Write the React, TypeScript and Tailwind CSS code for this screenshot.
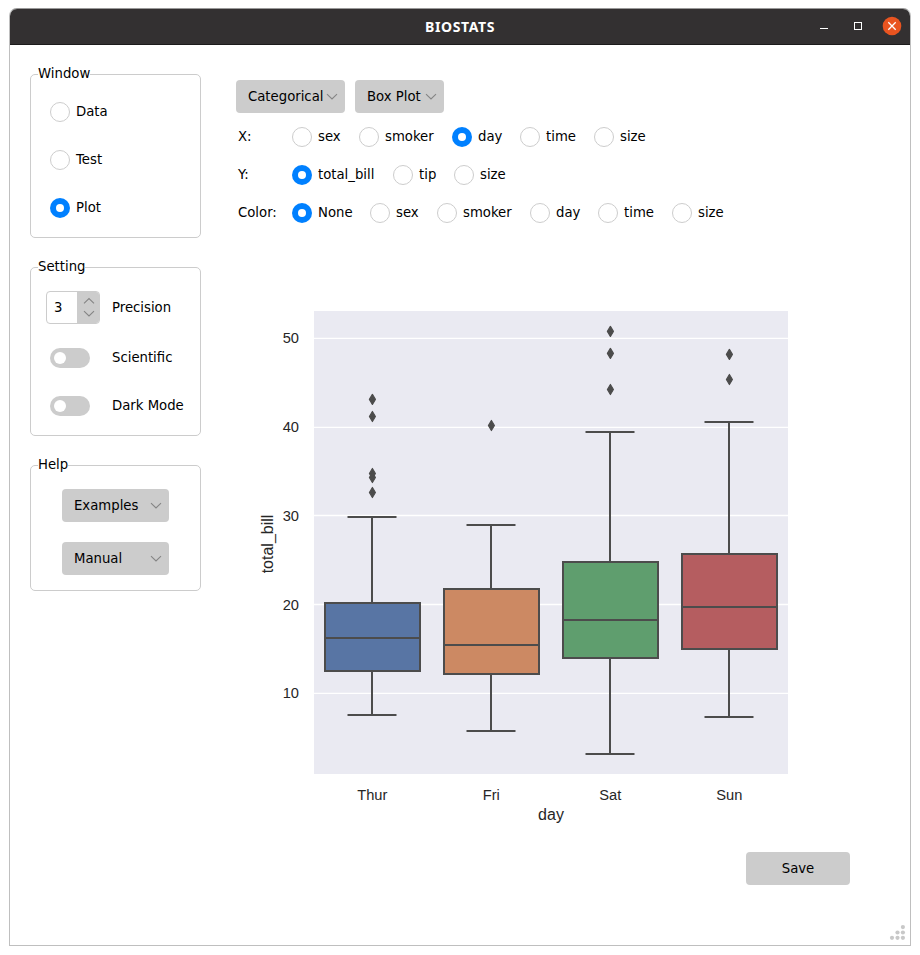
import React from "react";

const Chevron = ({ up = false }: { up?: boolean }) => (
  <svg width="12" height="8" viewBox="0 0 12 8" fill="none" stroke="#858585" strokeWidth="1.1" className="shrink-0">
    <path d={up ? "M1 6.3 L6 1.5 L11 6.3" : "M1 1.2 L6 6 L11 1.2"} />
  </svg>
);

const Dot = ({ on }: { on: boolean }) => (
  <span
    className={
      on
        ? "flex size-5 shrink-0 items-center justify-center rounded-full bg-[#0080ff]"
        : "size-5 shrink-0 rounded-full border border-[#cdcdcd] bg-white"
    }
  >
    {on && <span className="size-2 rounded-full bg-white" />}
  </span>
);

const Radio = ({ label, on = false, width = "" }: { label: string; on?: boolean; width?: string }) => (
  <label className={`flex h-5 shrink-0 items-center gap-1.5 ${width}`}>
    <Dot on={on} />
    <span>{label}</span>
  </label>
);

const Combo = ({ label, width }: { label: string; width: string }) => (
  <button className={`flex h-[33px] items-center justify-between rounded-[4px] bg-[#cccccc] pr-[7px] pl-3 ${width}`}>
    <span className="pt-px">{label}</span>
    <Chevron />
  </button>
);

const Group = ({ title, className, children }: { title: string; className: string; children: React.ReactNode }) => (
  <section className={`relative w-[171px] rounded-[5px] border border-[#cccccc] ${className}`}>
    <h2 className="absolute -top-[11px] left-[7px] bg-white leading-5">{title}</h2>
    {children}
  </section>
);

const Toggle = ({ label }: { label: string }) => (
  <label className="flex h-5 items-center gap-[22px] pl-[19px]">
    <span className="flex h-5 w-10 items-center rounded-full bg-[#cccccc] pl-1">
      <span className="size-3 rounded-full bg-white" />
    </span>
    <span className="whitespace-nowrap">{label}</span>
  </label>
);

const widths: Record<string, string> = {
  sex: "w-[67px]",
  smoker: "w-[93px]",
  day: "w-[68px]",
  time: "w-[74px]",
  size: "w-[74px]",
  total_bill: "w-[101px]",
  tip: "w-[61px]",
  None: "w-[78px]",
};

const rows = [
  { name: "X:", options: ["sex", "smoker", "day", "time", "size"], value: "day" },
  { name: "Y:", options: ["total_bill", "tip", "size"], value: "total_bill" },
  { name: "Color:", options: ["None", "sex", "smoker", "day", "time", "size"], value: "None" },
];

const boxes = [
  { name: "Thur", x: 372, fill: "#5875a4", hi: 517, q3: 603, med: 638, q1: 671, lo: 715, out: [399.4, 416.5, 473.5, 477.5, 492.5] },
  { name: "Fri", x: 491, fill: "#cc8963", hi: 525, q3: 589, med: 645, q1: 674, lo: 731, out: [425.5] },
  { name: "Sat", x: 610, fill: "#5f9e6e", hi: 432, q3: 562, med: 620, q1: 658, lo: 754, out: [331.4, 353.4, 389.5] },
  { name: "Sun", x: 729, fill: "#b55d60", hi: 422, q3: 554, med: 607, q1: 649, lo: 717, out: [354.4, 379.5] },
];

const ticks = [
  { v: 50, y: 338.4, b: 343 },
  { v: 40, y: 427.4, b: 432 },
  { v: 30, y: 515.5, b: 521 },
  { v: 20, y: 604.5, b: 610 },
  { v: 10, y: 693.4, b: 698 },
];

const BoxPlot = () => (
  <svg width="560" height="540" viewBox="236 295 560 540" fontFamily="'Liberation Sans', Arial, sans-serif" className="block">
    <rect x="314" y="311" width="474" height="463" fill="#eaeaf2" />
    {ticks.map((t) => (
      <g key={t.v}>
        <path d={`M314 ${t.y} H788`} stroke="#fff" strokeWidth="1.3" />
        <text x="299" y={t.b} textAnchor="end" fontSize="14.67" fill="#262626">
          {t.v}
        </text>
      </g>
    ))}
    {boxes.map((b) => (
      <g key={b.name} stroke="#4c4c4c" strokeWidth="2" fill="none">
        <rect x={b.x - 47} y={b.q3} width="95" height={b.q1 - b.q3} fill={b.fill} />
        <path d={`M${b.x} ${b.hi} V${b.q3} M${b.x} ${b.q1} V${b.lo}`} />
        <path d={`M${b.x - 24.5} ${b.hi} h49 M${b.x - 24.5} ${b.lo} h49 M${b.x - 47} ${b.med} h95`} />
        {b.out.map((y) => (
          <path key={y} d={`M${b.x + 0.4} ${y - 5} l3 5 l-3 5 l-3 -5 Z`} fill="#4c4c4c" strokeWidth="1.2" strokeLinejoin="round" />
        ))}
        <text x={b.x + 0.3} y="800" textAnchor="middle" fontSize="14.67" fill="#262626" stroke="none">
          {b.name}
        </text>
      </g>
    ))}
    <text x="551" y="820" textAnchor="middle" fontSize="16" fill="#262626">
      day
    </text>
    <text transform="translate(273 544) rotate(-90)" textAnchor="middle" fontSize="16" fill="#262626">
      total_bill
    </text>
  </svg>
);

const TitleBar = () => (
  <header className="flex h-9 shrink-0 items-center rounded-t-[7px] border-b border-[#1c1b1b] bg-[#333031] text-white">
    <span className="w-[100px]" />
    <h1 className="flex-1 text-center font-['Noto_Sans','Open_Sans',sans-serif] text-[14px] font-bold tracking-[0.6px]">BIOSTATS</h1>
    <svg width="100" height="36" viewBox="810 9 100 36" fill="none">
      <path d="M820 28.5 h8" stroke="#fff" />
      <rect x="854.5" y="22.5" width="7" height="7" stroke="#fff" />
      <circle cx="892" cy="26" r="9.3" fill="#e95420" />
      <path d="M888.3 22.3 l7.4 7.4 M895.7 22.3 l-7.4 7.4" stroke="#fff" strokeWidth="1.3" />
    </svg>
  </header>
);

export default function App() {
  return (
    <div className="h-[955px] w-[920px] overflow-hidden bg-white pt-2 pl-[9px] font-['DejaVu_Sans',sans-serif] text-[13.25px] leading-5 text-black">
      <div className="flex h-[938px] w-[902px] flex-col rounded-t-[8px] border border-[#bfbfbf] border-t-[#999999] bg-white">
        <TitleBar />
        <main className="flex flex-1">
          <aside className="flex w-[206px] shrink-0 flex-col gap-[29px] pt-[29px] pl-5">
            <Group title="Window" className="flex h-[164px] flex-col gap-7 pt-[27px] pl-[19px]">
              <Radio label="Data" />
              <Radio label="Test" />
              <Radio label="Plot" on />
            </Group>
            <Group title="Setting" className="h-[169px] pt-[23px]">
              <div className="flex items-center gap-3 pl-[15px]">
                <div className="flex h-[33px] w-[54px] overflow-hidden rounded-[4px] border border-[#cccccc]">
                  <span className="w-[30px] pt-1.5 pl-[7px]">3</span>
                  <span className="flex flex-1 flex-col items-center justify-center gap-[5px] bg-[#cccccc] pb-px pl-0.5">
                    <Chevron up />
                    <Chevron />
                  </span>
                </div>
                <span className="pt-px">Precision</span>
              </div>
              <div className="flex flex-col gap-7 pt-6">
                <Toggle label="Scientific" />
                <Toggle label="Dark Mode" />
              </div>
            </Group>
            <Group title="Help" className="flex h-[126px] flex-col gap-5 pt-[23px] pl-[31px]">
              <Combo label="Examples" width="w-[107px]" />
              <Combo label="Manual" width="w-[107px]" />
            </Group>
          </aside>
          <section className="flex flex-1 flex-col pt-[35px] pl-5">
            <div className="flex gap-2.5">
              <Combo label="Categorical" width="w-[109px]" />
              <Combo label="Box Plot" width="w-[89px]" />
            </div>
            <div className="flex flex-col gap-[18px] pt-3.5">
              {rows.map((r) => (
                <div key={r.name} className="flex h-5 items-center pl-0.5">
                  <span className="w-[54px]">{r.name}</span>
                  {r.options.map((o) => (
                    <Radio key={o} label={o} on={o === r.value} width={widths[o]} />
                  ))}
                </div>
              ))}
            </div>
            <div className="pt-[72px]">
              <BoxPlot />
            </div>
            <div className="flex justify-end pt-[17px] pr-[60px]">
              <button className="h-[33px] w-[104px] rounded-[4px] bg-[#cccccc]">Save</button>
            </div>
            <div className="flex flex-1 items-end justify-end pr-1 pb-1">
              <svg width="18" height="18" viewBox="888 923 18 18" fill="#c8c8c8">
                <circle cx="892" cy="937.8" r="2.1" />
                <circle cx="897.5" cy="937.8" r="2.1" />
                <circle cx="902.9" cy="937.8" r="2.1" />
                <circle cx="897.5" cy="932.5" r="2.1" />
                <circle cx="902.9" cy="932.5" r="2.1" />
                <circle cx="902.9" cy="927.1" r="2.1" />
              </svg>
            </div>
          </section>
        </main>
      </div>
    </div>
  );
}
